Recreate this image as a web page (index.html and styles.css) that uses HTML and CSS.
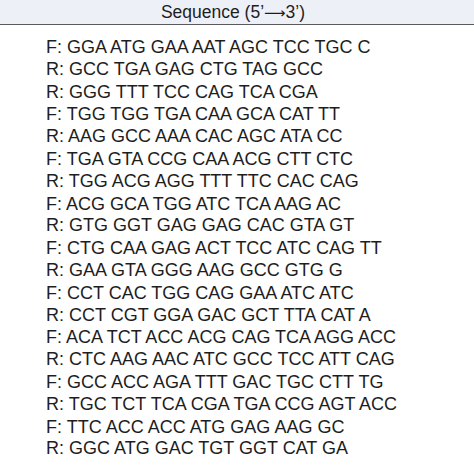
FILE: index.html
```html
<!DOCTYPE html>
<html>
<head>
<meta charset="utf-8">
<link rel="stylesheet" href="styles.css">
</head>
<body>
<div class="table">
  <div class="head">Sequence (5’<span class="arrow">⟶</span>3’)</div>
  <div class="body">
    <div class="pair"><div class="line">F: GGA ATG GAA AAT AGC TCC TGC C</div><div class="line">R: GCC TGA GAG CTG TAG GCC</div></div>
    <div class="pair"><div class="line">R: GGG TTT TCC CAG TCA CGA</div></div>
    <div class="pair"><div class="line">F: TGG TGG TGA CAA GCA CAT TT</div><div class="line">R: AAG GCC AAA CAC AGC ATA CC</div></div>
    <div class="pair"><div class="line">F: TGA GTA CCG CAA ACG CTT CTC</div><div class="line">R: TGG ACG AGG TTT TTC CAC CAG</div></div>
    <div class="pair"><div class="line">F: ACG GCA TGG ATC TCA AAG AC</div><div class="line">R: GTG GGT GAG GAG CAC GTA GT</div></div>
    <div class="pair"><div class="line">F: CTG CAA GAG ACT TCC ATC CAG TT</div><div class="line">R: GAA GTA GGG AAG GCC GTG G</div></div>
    <div class="pair"><div class="line">F: CCT CAC TGG CAG GAA ATC ATC</div><div class="line">R: CCT CGT GGA GAC GCT TTA CAT A</div></div>
    <div class="pair"><div class="line">F: ACA TCT ACC ACG CAG TCA AGG ACC</div><div class="line">R: CTC AAG AAC ATC GCC TCC ATT CAG</div></div>
    <div class="pair"><div class="line">F: GCC ACC AGA TTT GAC TGC CTT TG</div><div class="line">R: TGC TCT TCA CGA TGA CCG AGT ACC</div></div>
    <div class="pair"><div class="line">F: TTC ACC ACC ATG GAG AAG GC</div><div class="line">R: GGC ATG GAC TGT GGT CAT GA</div></div>
  </div>
</div>
</body>
</html>
```
FILE: styles.css
```css
html, body { margin: 0; padding: 0; background: #fff; }
body { font-family: "Liberation Sans", Arial, sans-serif; color: #1e1e1e; }
.table { width: 474px; height: 474px; overflow: hidden; }
.head {
  height: 24px;
  background: #edf1f7;
  border-bottom: 1.5px solid #5a5a5a;
  text-align: center;
  font-size: 17.5px;
  line-height: 25px;
  padding-right: 8px;
}
.arrow { font-family: "DejaVu Sans", sans-serif; font-size: 15px; }
.body { padding: 12px 0 0 46px; display: flex; flex-direction: column; gap: 1px; }
.line { font-size: 18px; line-height: 21.8px; white-space: nowrap; }
```
